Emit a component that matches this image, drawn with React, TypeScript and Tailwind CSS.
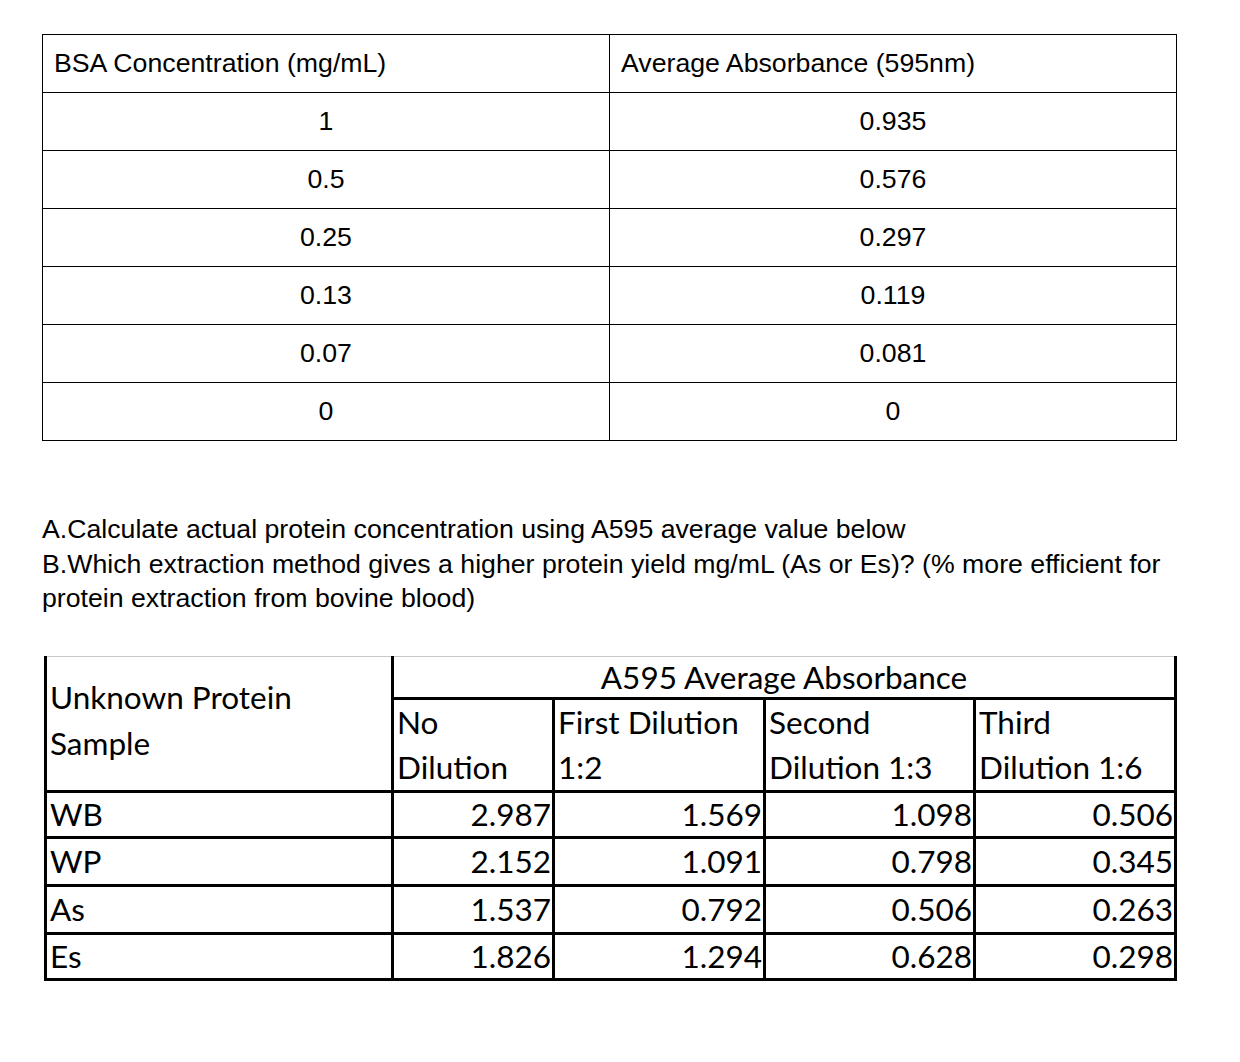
import React from 'react';

const standards: [string, string][] = [
  ['1', '0.935'],
  ['0.5', '0.576'],
  ['0.25', '0.297'],
  ['0.13', '0.119'],
  ['0.07', '0.081'],
  ['0', '0'],
];

const samples: string[][] = [
  ['WB', '2.987', '1.569', '1.098', '0.506'],
  ['WP', '2.152', '1.091', '0.798', '0.345'],
  ['As', '1.537', '0.792', '0.506', '0.263'],
  ['Es', '1.826', '1.294', '0.628', '0.298'],
];

const rowHeights = ['h-[46px]', 'h-[48px]', 'h-[48px]', 'h-[46px]'];

const subHead = 'border-[3px] border-black pl-[3px] text-left align-bottom font-normal leading-[45px]';

const App: React.FC = () => {
  return (
    <div className="min-h-screen bg-white px-[42px] pt-[34px] text-black">
      {/* standard curve table */}
      <table className="w-[1134px] table-fixed border-collapse font-['Liberation_Sans',Arial,sans-serif] text-[26.7px]">
        <colgroup>
          <col className="w-[567px]" />
          <col className="w-[567px]" />
        </colgroup>
        <thead>
          <tr className="h-[58px]">
            <th className="border border-black px-[11px] text-left font-normal">
              BSA Concentration (mg/mL)
            </th>
            <th className="border border-black px-[11px] text-left font-normal">
              Average Absorbance (595nm)
            </th>
          </tr>
        </thead>
        <tbody>
          {standards.map(([conc, abs]) => (
            <tr key={conc} className="h-[58px]">
              <td className="border border-black text-center">{conc}</td>
              <td className="border border-black text-center">{abs}</td>
            </tr>
          ))}
        </tbody>
      </table>

      <p className="mt-[71px] w-[1150px] font-['Liberation_Sans',Arial,sans-serif] text-[26.7px] leading-[34.5px]">
        A.Calculate actual protein concentration using A595 average value below
        <br />
        B.Which extraction method gives a higher protein yield mg/mL (As or Es)? (% more efficient for
        protein extraction from bovine blood)
      </p>

      {/* unknown samples table */}
      <table className="mt-[40px] ml-[2px] w-[1130px] table-fixed border-collapse font-['Lato',sans-serif] text-[31.5px] leading-[46px]">
        <colgroup>
          <col className="w-[347px]" />
          <col className="w-[161px]" />
          <col className="w-[211px]" />
          <col className="w-[210px]" />
          <col className="w-[201px]" />
        </colgroup>
        <thead>
          <tr className="h-[42px]">
            <th
              rowSpan={2}
              className="border-x-[3px] border-b-[3px] border-t border-x-black border-b-black border-t-[#c8c8c8] pb-[6px] pl-[3px] text-left align-middle font-normal"
            >
              Unknown Protein
              <br />
              Sample
            </th>
            <th
              colSpan={4}
              className="border-x-[3px] border-b-[3px] border-t border-x-black border-b-black border-t-[#c8c8c8] text-center font-normal leading-[40px]"
            >
              A595 Average Absorbance
            </th>
          </tr>
          <tr className="h-[90px]">
            <th className={subHead}>
              No
              <br />
              Dilution
            </th>
            <th className={subHead}>
              First Dilution
              <br />
              1:2
            </th>
            <th className={subHead}>
              Second
              <br />
              Dilution 1:3
            </th>
            <th className={subHead}>
              Third
              <br />
              Dilution 1:6
            </th>
          </tr>
        </thead>
        <tbody>
          {samples.map((row, i) => (
            <tr key={row[0]} className={rowHeights[i]}>
              {row.map((cell, j) => (
                <td
                  key={j}
                  className={
                    j === 0
                      ? 'border-[3px] border-black pl-[3px] text-left leading-[40px]'
                      : 'border-[3px] border-black pr-[1px] text-right leading-[40px]'
                  }
                >
                  {cell}
                </td>
              ))}
            </tr>
          ))}
        </tbody>
      </table>
    </div>
  );
};

export default App;
